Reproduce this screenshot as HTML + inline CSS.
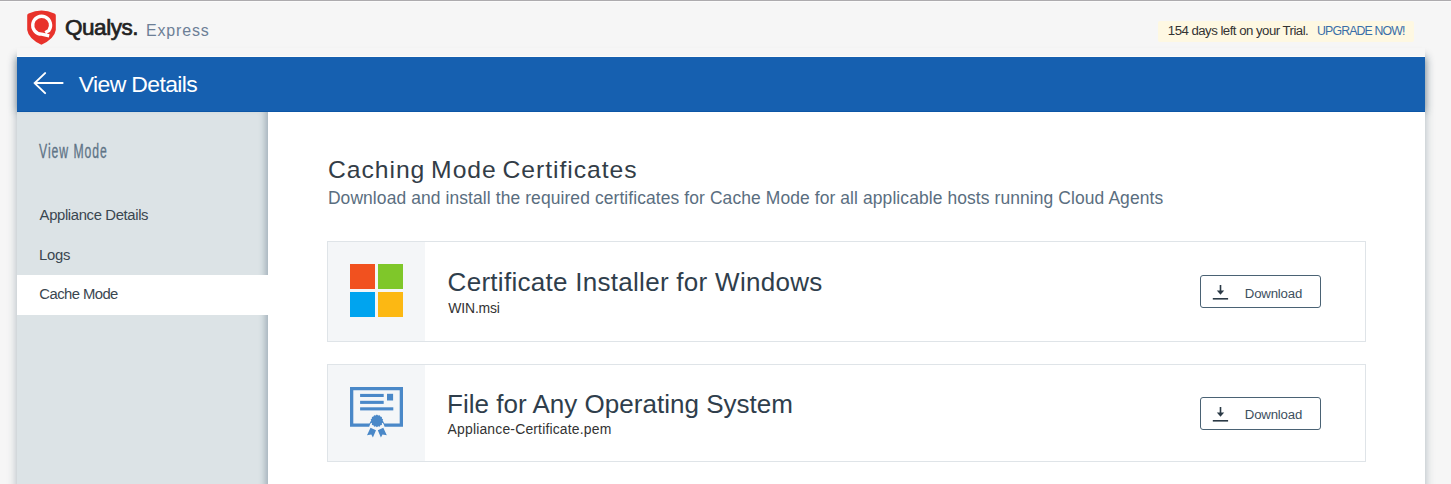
<!DOCTYPE html>
<html><head><meta charset="utf-8">
<style>
*{box-sizing:border-box;margin:0;padding:0}
html,body{width:1451px;height:484px;overflow:hidden;background:#f6f6f6;font-family:"Liberation Sans",sans-serif}
.t{position:absolute;line-height:1;white-space:nowrap}
.abs{position:absolute}
</style></head><body>
<div class="abs" style="left:0;top:0;width:1451px;height:1px;background:#adabae"></div><div class="abs" style="left:0;top:1px;width:1451px;height:1px;background:#fbfbfb"></div>
<svg class="abs" style="left:22px;top:5px" width="40" height="45" viewBox="0 0 40 45">
  <path d="M5.2 10.5 Q5.2 9 6.6 8.4 Q19.5 2.6 32.4 8.4 Q33.8 9 33.8 10.5 L33.8 25 Q32.6 33.6 19.4 39.8 Q6.4 33.6 5.2 25 Z" fill="#e8322b"/>
  <path d="M27.2 30.9 L19.6 29.2 A8.95 8.95 0 1 1 26.9 25.5 L23.3 27.6" stroke="#fff" stroke-width="3.3" fill="none" stroke-linejoin="round"/>
</svg>
<div class="abs" style="left:1158px;top:21px;width:256px;height:21px;background:#fef8e2;border-radius:2px"></div>
<!-- panel -->
<div class="abs" style="left:17px;top:57px;width:1408px;height:440px;box-shadow:0 0 9px rgba(40,70,90,0.36)"></div>
<div class="abs" style="left:17px;top:57px;width:1408px;height:55px;background:#1660b0;box-shadow:0 0 8px rgba(30,60,80,0.45)"></div>
<div class="abs" style="left:17px;top:48px;width:1408px;height:9px;background:#f6f6f6;border-bottom:1px solid #fdfdfb"></div>
<div class="abs" style="left:17px;top:111px;width:1408px;height:1px;background:#0c56a6"></div>
<div class="abs" style="left:17px;top:112px;width:1408px;height:400px;background:#fff"></div>
<div class="abs" style="left:17px;top:112px;width:251px;height:400px;background:#dce3e6;box-shadow:inset -7px 0 6px -4px rgba(60,90,110,0.35)"></div>
<div class="abs" style="left:17px;top:275px;width:251px;height:40px;background:#fff"></div>
<svg class="abs" style="left:33px;top:72px" width="31" height="23" viewBox="0 0 31 23"><path d="M29.6 11.1H1.6M12.1 1.1L1.6 11.1L12.1 21.1" stroke="#fff" stroke-width="2" stroke-linecap="round" stroke-linejoin="round" fill="none"/></svg>
<!-- cards -->
<div class="abs" style="left:327px;top:241px;width:1039px;height:101px;border:1px solid #dfe4e8;background:#fff"></div>
<div class="abs" style="left:328px;top:242px;width:97px;height:99px;background:#f4f6f8"></div>
<div class="abs" style="left:327px;top:364px;width:1039px;height:98px;border:1px solid #dfe4e8;background:#fff"></div>
<div class="abs" style="left:328px;top:365px;width:97px;height:96px;background:#f4f6f8"></div>
<!-- windows logo -->
<div class="abs" style="left:350px;top:264px;width:25px;height:25px;background:#f1511f"></div>
<div class="abs" style="left:378px;top:264px;width:25px;height:25px;background:#7fc72a"></div>
<div class="abs" style="left:350px;top:292px;width:25px;height:25px;background:#00a4ef"></div>
<div class="abs" style="left:378px;top:292px;width:25px;height:25px;background:#fcb813"></div>
<!-- cert icon -->
<svg class="abs" style="left:345px;top:380px" width="65" height="65" viewBox="0 0 65 65">
  <g fill="#4a88c8">
    <path d="M5 7H58V46.7H39.6A7.9 7.9 0 0 0 24.2 46.7H5Z M8.3 10.3V43.4H24.5A7.9 7.9 0 0 1 39.3 43.4H54.7V10.3Z" fill-rule="evenodd"/>
    <rect x="15.1" y="13.9" width="23.6" height="3.1"/>
    <rect x="15.1" y="20.8" width="23.6" height="3.1"/>
    <rect x="15.1" y="27.3" width="33.2" height="3.1"/>
    <rect x="42" y="13.8" width="6.1" height="6.7"/>
    <path d="M31.90 34.50 L33.12 35.54 L34.68 35.13 L35.33 36.60 L36.90 36.91 L36.86 38.51 L38.14 39.48 L37.40 40.90 L38.14 42.32 L36.86 43.29 L36.90 44.89 L35.33 45.20 L34.68 46.67 L33.12 46.26 L31.90 47.30 L30.68 46.26 L29.12 46.67 L28.47 45.20 L26.90 44.89 L26.94 43.29 L25.66 42.32 L26.40 40.90 L25.66 39.48 L26.94 38.51 L26.90 36.91 L28.47 36.60 L29.12 35.13 L30.68 35.54Z"/>
    <path d="M25.5 47.8 L31 50.3 L27.9 57.4 L26.3 54.4 L22 55.2Z M38.3 47.8 L32.8 50.3 L35.9 57.4 L37.5 54.4 L41.8 55.2Z"/>
  </g>
</svg>
<!-- buttons -->
<div class="abs" style="left:1200px;top:275px;width:121px;height:33px;border:1px solid #4a6274;border-radius:3px"></div>
<div class="abs" style="left:1200px;top:397px;width:121px;height:33px;border:1px solid #4a6274;border-radius:3px"></div>
<svg class="abs" style="left:1210px;top:282px" width="20" height="20" viewBox="0 0 20 20"><path d="M10.5 3V11" stroke="#2b3a46" stroke-width="1.6"/><path d="M6.8 8.5H14.2L10.5 12.8Z" fill="#2b3a46"/><rect x="2.8" y="16" width="15.3" height="1.6" fill="#2b3a46"/></svg>
<svg class="abs" style="left:1210px;top:404px" width="20" height="20" viewBox="0 0 20 20"><path d="M10.5 3V11" stroke="#2b3a46" stroke-width="1.6"/><path d="M6.8 8.5H14.2L10.5 12.8Z" fill="#2b3a46"/><rect x="2.8" y="16" width="15.3" height="1.6" fill="#2b3a46"/></svg>
<div class="t" id="Qualys" style="left:65.00px;top:16.53px;font-size:22.53px;color:#222;letter-spacing:-0.466px;-webkit-text-stroke:0.7px #222;">Qualys.</div>
<div class="t" id="Express" style="left:146.00px;top:22.87px;font-size:15.99px;color:#6d7f96;letter-spacing:0.834px;">Express</div>
<div class="t" id="trial" style="left:1167.80px;top:23.80px;font-size:13.23px;color:#333;letter-spacing:-0.520px;">154 days left on your Trial.</div>
<div class="t" id="upgrade" style="left:1317.00px;top:24.59px;font-size:12.30px;color:#3a6ea8;letter-spacing:-0.836px;">UPGRADE NOW!</div>
<div class="t" id="ViewDetails" style="left:78.80px;top:72.56px;font-size:22.97px;color:#fff;letter-spacing:-0.636px;">View Details</div>
<div class="t" id="ViewMode" style="left:39.00px;top:140.77px;font-size:20.35px;color:#5f7486;letter-spacing:1.600px;-webkit-text-stroke:0.35px #5f7486;transform:scaleX(0.6000);transform-origin:0 0;">View Mode</div>
<div class="t" id="Appliance" style="left:39.60px;top:207.95px;font-size:14.83px;color:#3a4650;letter-spacing:-0.352px;">Appliance Details</div>
<div class="t" id="Logs" style="left:39.00px;top:248.45px;font-size:14.83px;color:#3a4650;letter-spacing:-0.269px;">Logs</div>
<div class="t" id="Cache" style="left:39.30px;top:287.45px;font-size:14.83px;color:#3a4650;letter-spacing:-0.556px;">Cache Mode</div>
<div class="t" id="Heading" style="left:328.00px;top:157.78px;font-size:24.71px;color:#333d47;letter-spacing:0.951px;word-spacing:-2px;">Caching Mode Certificates</div>
<div class="t" id="Sub" style="left:327.90px;top:189.74px;font-size:17.44px;color:#5a6e80;letter-spacing:0.098px;">Download and install the required certificates for Cache Mode for all applicable hosts running Cloud Agents</div>
<div class="t" id="Title1" style="left:447.60px;top:269.08px;font-size:26.02px;color:#2f3e4c;letter-spacing:0.278px;">Certificate Installer for Windows</div>
<div class="t" id="WIN" style="left:448.30px;top:302.19px;font-size:13.95px;color:#333;letter-spacing:-0.168px;">WIN.msi</div>
<div class="t" id="Title2" style="left:447.00px;top:391.38px;font-size:26.02px;color:#2f3e4c;letter-spacing:0.015px;">File for Any Operating System</div>
<div class="t" id="pem" style="left:447.60px;top:423.39px;font-size:13.95px;color:#333;letter-spacing:0.170px;">Appliance-Certificate.pem</div>
<div class="t" id="DL1" style="left:1244.80px;top:286.80px;font-size:13.23px;color:#3d5060;letter-spacing:-0.185px;">Download</div>
<div class="t" id="DL2" style="left:1244.80px;top:407.80px;font-size:13.23px;color:#3d5060;letter-spacing:-0.185px;">Download</div>
</body></html>
